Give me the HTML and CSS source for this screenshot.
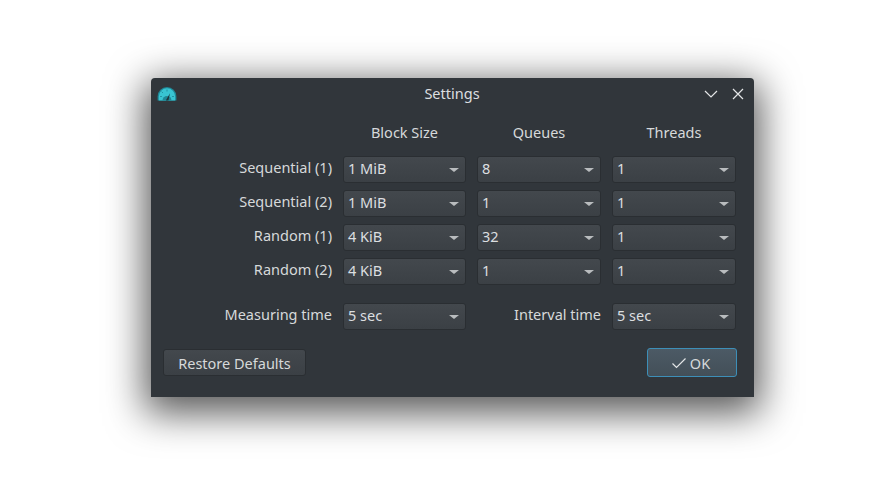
FILE: index.html
```html
<!DOCTYPE html>
<html lang="en">
<head>
<meta charset="utf-8">
<title>Settings</title>
<link rel="stylesheet" href="styles.css">
</head>
<body>
<main class="window">
  <header class="titlebar">
    <svg class="app-icon" viewBox="0 0 20 16" width="20" height="16">
      <path d="M.6 14.500V10.500a9.400 9.400 0 0 1 18.800 0v4z" fill="#1f8796"/>
      <path d="M1.800 14.500V10.500a8.200 8.200 0 0 1 16.400 0v4z" fill="#38c4d2"/>
      <path d="M5.500 14.500a4.500 4.500 0 0 1 9 0z" fill="#1f8796"/>
      <path d="M8.800 14.500 13 7.200 11.400 14.500z" fill="#20353c"/>
      <path d="M10 3.500v2M4.600 5.600 6 7M3 10.500h2M15 10.500h2" stroke="#1f8796" stroke-width=".8"/>
    </svg>
    <span class="title">Settings</span>
    <div class="controls">
      <svg viewBox="0 0 14 14" width="14" height="14"><path d="M1 4l6 6 6-6" fill="none" stroke="#e4e6e7" stroke-width="1.200"/></svg>
      <svg viewBox="0 0 14 14" width="14" height="14"><path d="M2 2l10 10M12 2 2 12" fill="none" stroke="#e4e6e7" stroke-width="1.200"/></svg>
    </div>
  </header>

  <section class="form">
    <div class="heading first">Block Size</div>
    <div class="heading">Queues</div>
    <div class="heading">Threads</div>

    <div class="label">Sequential (1)</div>
    <div class="combo"><span>1 MiB</span><i></i></div>
    <div class="combo"><span>8</span><i></i></div>
    <div class="combo"><span>1</span><i></i></div>

    <div class="label">Sequential (2)</div>
    <div class="combo"><span>1 MiB</span><i></i></div>
    <div class="combo"><span>1</span><i></i></div>
    <div class="combo"><span>1</span><i></i></div>

    <div class="label">Random (1)</div>
    <div class="combo"><span>4 KiB</span><i></i></div>
    <div class="combo"><span>32</span><i></i></div>
    <div class="combo"><span>1</span><i></i></div>

    <div class="label">Random (2)</div>
    <div class="combo"><span>4 KiB</span><i></i></div>
    <div class="combo"><span>1</span><i></i></div>
    <div class="combo"><span>1</span><i></i></div>

    <div class="label timing">Measuring time</div>
    <div class="combo timing"><span>5 sec</span><i></i></div>
    <div class="label timing">Interval time</div>
    <div class="combo timing"><span>5 sec</span><i></i></div>
  </section>

  <footer class="actions">
    <button class="btn" type="button">Restore Defaults</button>
    <button class="btn primary" type="button">
      <svg viewBox="0 0 16 12" width="16" height="12"><path d="M1.500 6.500 5.500 10.500 14.500 1.500" fill="none" stroke="#e4e6e7" stroke-width="1.200"/></svg>
      OK
    </button>
  </footer>
</main>
</body>
</html>
```

FILE: styles.css
```css
* {
  box-sizing: border-box;
}

html, body {
  margin: 0;
  height: 100%;
  background: #fff;
  overflow: hidden;
}

body {
  padding: 78px 134px 103px 151px;
  font-family: "Noto Sans", sans-serif;
  font-size: 14.5px;
  color: #d6d9da;
}

.window {
  width: 603px;
  height: 319px;
  background: #31363b;
  border-radius: 4px 4px 0 0;
  box-shadow: 0 10px 38px 6px rgba(0, 0, 0, .66);
  display: flex;
  flex-direction: column;
}

.titlebar {
  height: 31px;
  flex: none;
  display: grid;
  grid-template-columns: 1fr auto 1fr;
  align-items: center;
  padding: 0 9px 0 6px;
}

.app-icon {
  display: block;
}

.title {
  line-height: 31px;
  margin-left: 2px;
  color: #dcdfe0;
}

.controls {
  display: flex;
  justify-content: flex-end;
  gap: 13px;
}

.form {
  display: grid;
  grid-template-columns: 181px 123px 124px 124px;
  grid-template-rows: 30px;
  grid-auto-rows: 27px;
  column-gap: 11px;
  row-gap: 7px;
  padding: 10px 0 0 0;
}

.heading {
  height: 27px;
  line-height: 27px;
  text-align: center;
}

.heading.first {
  grid-column: 2;
}

.label {
  text-align: right;
  line-height: 23px;
  height: 24px;
}

.combo {
  height: 27px;
  border: 1px solid #2a2e32;
  border-radius: 3px;
  background: linear-gradient(#43484d, #3b4045);
  display: flex;
  align-items: center;
  justify-content: space-between;
  padding: 0 6px 0 4px;
  color: #dcdfe0;
}

.combo span {
  line-height: 25px;
  margin-bottom: 2px;
}

.combo i {
  width: 0;
  height: 0;
  border-left: 5px solid transparent;
  border-right: 5px solid transparent;
  border-top: 4px solid #b9bcbe;
}

.timing {
  margin-top: 11px;
}

.actions {
  display: flex;
  justify-content: space-between;
  align-items: center;
  padding: 0 17px 0 12px;
  margin-top: 29px;
}

.btn {
  height: 27px;
  width: 143px;
  padding: 0;
  border: 1px solid #2a2e32;
  border-radius: 3px;
  background: linear-gradient(#43484d, #3b4045);
  color: #d6d9da;
  font: 14.5px "Noto Sans", sans-serif;
  display: flex;
  align-items: center;
  justify-content: center;
  gap: 3px;
}

.btn.primary {
  width: 90px;
  height: 29px;
  padding-right: 3px;
  border-color: #3d8fb8;
  background: linear-gradient(#4c5a65, #434f58);
}
```
